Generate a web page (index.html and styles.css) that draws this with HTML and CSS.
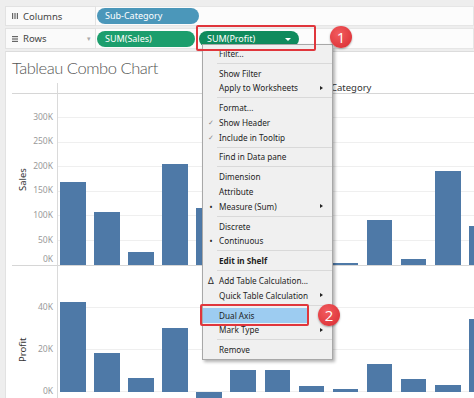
FILE: index.html
```html
<!DOCTYPE html>
<html lang="en">
<head>
    <meta charset="UTF-8">
    <title>Tableau Combo Chart</title>
    <link rel="stylesheet" href="styles.css">
</head>
<body>
    <div class="shelves">
        <div class="shelf">
            <div class="shelf-label">
                <svg class="shelf-icon" width="6" height="6" viewBox="0 0 6 6"><rect x="0" y="0" width="1.2" height="6"/><rect x="2.4" y="0" width="1.2" height="6"/><rect x="4.8" y="0" width="1.2" height="6"/></svg>
                Columns
            </div>
            <div class="shelf-drop">
                <span class="pill pill-dim">Sub-Category</span>
            </div>
        </div>
        <div class="shelf">
            <div class="shelf-label">
                <svg class="shelf-icon" width="6" height="6" viewBox="0 0 6 6"><rect x="0" y="0" width="6" height="1.2"/><rect x="0" y="2.4" width="6" height="1.2"/><rect x="0" y="4.8" width="6" height="1.2"/></svg>
                Rows
                <span class="shelf-caret">&#9662;</span>
            </div>
            <div class="shelf-drop">
                <span class="pill pill-measure">SUM(Sales)</span>
                <span class="pill pill-measure pill-active">SUM(Profit)<span class="pill-caret"></span></span>
            </div>
        </div>
    </div>

    <div class="sheet">
        <h1>Tableau Combo Chart</h1>
        <div class="chart">
            <div class="corner"></div>
            <div class="col-header"><span>Sub-Category</span></div>

            <div class="axis axis-sales">
                <div class="axis-title">Sales</div>
                <div class="ticks ticks-sales">
                    <span>300K</span><span>250K</span><span>200K</span><span>150K</span><span>100K</span><span>50K</span><span class="tick-zero">0K</span>
                </div>
            </div>
            <div class="pane pane-sales">
                <div class="bar" style="height:83px"></div>
                <div class="bar" style="height:53px"></div>
                <div class="bar" style="height:13px"></div>
                <div class="bar" style="height:101px"></div>
                <div class="bar" style="height:57px"></div>
                <div class="bar" style="height:40px"></div>
                <div class="bar" style="height:62px"></div>
                <div class="bar" style="height:30px"></div>
                <div class="bar" style="height:2px"></div>
                <div class="bar" style="height:45px"></div>
                <div class="bar" style="height:6px"></div>
                <div class="bar" style="height:94px"></div>
                <div class="bar" style="height:39px"></div>
            </div>

            <div class="axis axis-profit">
                <div class="axis-title">Profit</div>
                <div class="ticks ticks-profit">
                    <span>40K</span><span>20K</span><span>0K</span>
                </div>
            </div>
            <div class="pane pane-profit">
                <div class="bars">
                    <div class="bar" style="height:90px"></div>
                    <div class="bar" style="height:39px"></div>
                    <div class="bar" style="height:14px"></div>
                    <div class="bar" style="height:64px"></div>
                    <div class="bar" style="height:12px;margin-bottom:-12px"></div>
                    <div class="bar" style="height:22px"></div>
                    <div class="bar" style="height:22px"></div>
                    <div class="bar" style="height:6px"></div>
                    <div class="bar" style="height:3px"></div>
                    <div class="bar" style="height:28px"></div>
                    <div class="bar" style="height:13px"></div>
                    <div class="bar" style="height:7px"></div>
                    <div class="bar" style="height:73px"></div>
                </div>
            </div>
        </div>
    </div>

    <!-- context menu for the SUM(Profit) pill -->
    <div class="menu">
        <div class="mi"><span class="mi-icon"></span><span class="mi-text">Filter...</span></div>
        <div class="sep"></div>
        <div class="mi"><span class="mi-icon"></span><span class="mi-text">Show Filter</span></div>
        <div class="mi"><span class="mi-icon"></span><span class="mi-text">Apply to Worksheets</span><span class="mi-sub"></span></div>
        <div class="sep"></div>
        <div class="mi"><span class="mi-icon"></span><span class="mi-text">Format...</span></div>
        <div class="mi"><span class="mi-icon check">&#10003;</span><span class="mi-text">Show Header</span></div>
        <div class="mi"><span class="mi-icon check">&#10003;</span><span class="mi-text">Include in Tooltip</span></div>
        <div class="sep"></div>
        <div class="mi"><span class="mi-icon"></span><span class="mi-text">Find in Data pane</span></div>
        <div class="sep"></div>
        <div class="mi"><span class="mi-icon"></span><span class="mi-text">Dimension</span></div>
        <div class="mi"><span class="mi-icon"></span><span class="mi-text">Attribute</span></div>
        <div class="mi"><span class="mi-icon dot">&#8226;</span><span class="mi-text">Measure (Sum)</span><span class="mi-sub"></span></div>
        <div class="sep"></div>
        <div class="mi"><span class="mi-icon"></span><span class="mi-text">Discrete</span></div>
        <div class="mi"><span class="mi-icon dot">&#8226;</span><span class="mi-text">Continuous</span></div>
        <div class="sep"></div>
        <div class="mi mi-bold"><span class="mi-icon"></span><span class="mi-text">Edit in Shelf</span></div>
        <div class="sep"></div>
        <div class="mi"><span class="mi-icon delta">&#916;</span><span class="mi-text">Add Table Calculation...</span></div>
        <div class="mi"><span class="mi-icon"></span><span class="mi-text">Quick Table Calculation</span><span class="mi-sub"></span></div>
        <div class="sep"></div>
        <div class="mi mi-hl"><span class="mi-icon"></span><span class="mi-text">Dual Axis</span></div>
        <div class="mi"><span class="mi-icon"></span><span class="mi-text">Mark Type</span><span class="mi-sub"></span></div>
        <div class="sep"></div>
        <div class="mi"><span class="mi-icon"></span><span class="mi-text">Remove</span></div>
    </div>

    <!-- annotations -->
    <div class="callout callout-pill"></div>
    <div class="callout callout-dual"></div>
    <div class="badge badge-1">1</div>
    <div class="badge badge-2">2</div>
</body>
</html>
```

FILE: styles.css
```css
/* Tableau worksheet with a pill context menu */
:root {
    --bar: #4e79a7;
    --grid: #efefef;
    --line: #d6d6d6;
    --red: #e0363c;
}

body {
    margin: 0;
    width: 474px;
    height: 398px;
    overflow: hidden;
    position: relative;
    background-color: #eeeeee;
    font-family: 'Noto Sans', 'Liberation Sans', sans-serif;
    color: #333;
}

/* shelves */
.shelves {
    padding: 6px 0 2px 5px;
}

.shelf {
    display: flex;
    height: 20px;
    margin-bottom: 2px;
}

.shelf:last-child {
    height: 21px;
    margin-bottom: 0;
}

.shelf-label {
    width: 91px;
    box-sizing: border-box;
    display: flex;
    align-items: center;
    gap: 5px;
    padding-left: 6px;
    background-color: #fafafa;
    border: 1px solid #e2e2e2;
    font-size: 9.5px;
    color: #444;
}

.shelf-icon {
    fill: #666;
}

.shelf-caret {
    margin-left: auto;
    padding-right: 4px;
    font-size: 7px;
    color: #aaa;
}

.shelf-drop {
    flex: 1;
    display: flex;
    align-items: center;
    gap: 4px;
    padding-left: 1px;
    background-color: #fcfcfc;
    border: 1px solid #e6e6e6;
    border-left: 0;
}

.pill {
    height: 16px;
    box-sizing: border-box;
    border-radius: 8px;
    padding-left: 8px;
    font-size: 9px;
    line-height: 16px;
    color: #fff;
}

.pill-dim {
    width: 102px;
    background-color: #4b97ba;
}

.pill-measure {
    width: 98px;
    background-color: #1c9e6d;
}

.pill-active {
    width: 100px;
    position: relative;
    background-color: #108b5d;
}

.pill-caret {
    position: absolute;
    right: 8px;
    top: 7px;
    border-top: 3px solid #fff;
    border-left: 3px solid transparent;
    border-right: 3px solid transparent;
}

/* worksheet */
.sheet {
    margin-left: 5px;
    height: 348px;
    background-color: #fff;
    border-top: 1px solid #dcdcdc;
    border-left: 1px solid #e2e2e2;
}

h1 {
    margin: 6px 0 5px 6px;
    font-family: Lato, 'Open Sans', sans-serif;
    font-weight: 300;
    font-size: 16.5px;
    line-height: 20px;
    letter-spacing: -0.45px;
    color: #555;
}

.chart {
    display: grid;
    grid-template-columns: 45px 1fr;
    grid-template-rows: 11px 172px 168px;
    margin-left: 6px;
}

.corner,
.col-header {
    border-bottom: 1px solid var(--line);
}

.col-header {
    border-left: 1px solid #dadada;
    padding-left: 253px;
    font-size: 9.5px;
    line-height: 10px;
    color: #333;
}

.axis {
    display: flex;
}

.axis-sales {
    border-bottom: 1px solid var(--line);
}

.axis-title {
    width: 20px;
    display: flex;
    align-items: center;
    justify-content: center;
    writing-mode: vertical-rl;
    transform: rotate(180deg);
    font-size: 9.5px;
    color: #333;
}

.ticks {
    flex: 1;
    display: flex;
    flex-direction: column;
    align-items: flex-end;
    padding-right: 4px;
    font-size: 8.5px;
    color: #9a9a9a;
}

.ticks-sales {
    padding-top: 10.7px;
}

.ticks-sales span {
    height: 24.6px;
    line-height: 24.6px;
}

.ticks-sales .tick-zero {
    line-height: 13.4px;
}

.ticks-profit {
    padding-top: 20px;
}

.ticks-profit span {
    height: 42px;
    line-height: 42px;
}

.pane {
    border-left: 1px solid #dadada;
    padding-left: 2px;
}

.pane-sales,
.bars {
    display: flex;
    align-items: flex-end;
    gap: 8.6px;
}

.pane-sales {
    border-bottom: 1px solid var(--line);
    background-image: repeating-linear-gradient(to bottom,
        transparent 0, transparent 23px,
        var(--grid) 23px, var(--grid) 24px,
        transparent 24px, transparent 24.6px);
}

.bars {
    height: 126px;
    background-image: repeating-linear-gradient(to bottom,
        transparent 0, transparent 41px,
        var(--grid) 41px, var(--grid) 42px);
}

.bar {
    flex: none;
    width: 25.5px;
    background-color: var(--bar);
}

/* context menu */
.menu {
    position: absolute;
    left: 202px;
    top: 44px;
    width: 131px;
    box-sizing: border-box;
    padding: 1px 0 2px;
    background-color: #f0f0f0;
    border: 1px solid #a8a8a8;
    box-shadow: 2px 2px 3px rgba(0, 0, 0, 0.3);
    font-size: 8.2px;
    color: #1e1e1e;
}

.mi {
    display: flex;
    align-items: center;
    height: 14.6px;
}

.mi-icon {
    width: 16px;
    flex: none;
    text-align: center;
}

.check {
    font-size: 7px;
    color: #8a8a8a;
}

.dot {
    font-size: 8px;
}

.delta {
    font-size: 9px;
}

.mi-text {
    flex: 1;
}

.mi-sub {
    margin-right: 9px;
    border-left: 3px solid #222;
    border-top: 2.5px solid transparent;
    border-bottom: 2.5px solid transparent;
}

.mi-bold {
    font-weight: 700;
}

.mi-hl {
    margin-right: 25px;
    background-color: #9dccf1;
}

.sep {
    height: 1px;
    margin: 2.2px 0 2.2px 14px;
    background-color: #d9d9d9;
}

/* annotations */
.callout {
    position: absolute;
    box-sizing: border-box;
    border: 2px solid var(--red);
    border-radius: 2px;
}

.callout-pill {
    left: 196px;
    top: 25px;
    width: 120px;
    height: 26px;
}

.callout-dual {
    left: 200px;
    top: 304px;
    width: 109px;
    height: 22px;
}

.badge {
    position: absolute;
    width: 22px;
    height: 22px;
    border-radius: 50%;
    background: radial-gradient(circle at 40% 35%, #f25c5f, #d82a30);
    box-shadow: 0 1px 2px rgba(0, 0, 0, 0.35);
    font-family: 'Open Sans', sans-serif;
    font-size: 15px;
    line-height: 22px;
    text-align: center;
    color: #fff;
}

.badge-1 {
    left: 330px;
    top: 26px;
}

.badge-2 {
    left: 318px;
    top: 304px;
}
```
